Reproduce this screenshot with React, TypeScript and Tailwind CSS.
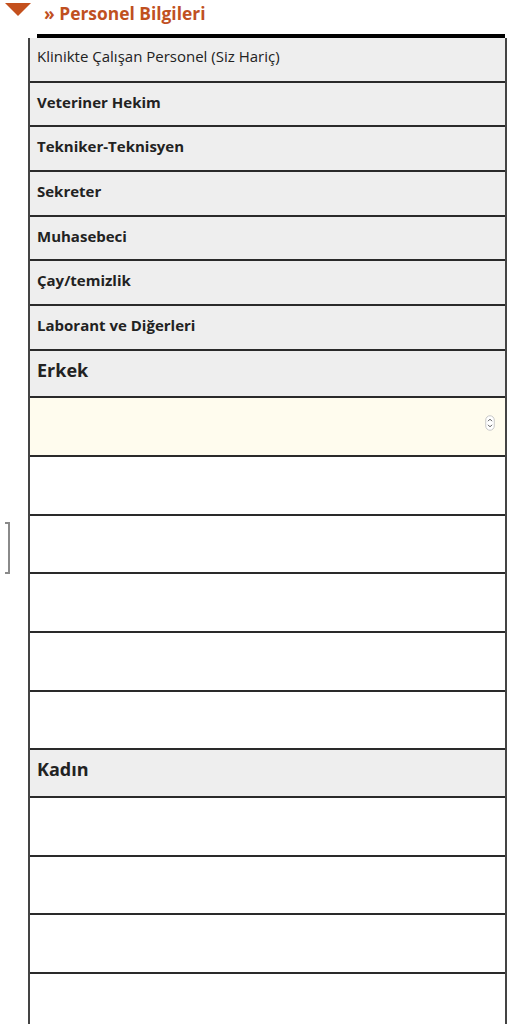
import React from "react";

const labels = [
  "Veteriner Hekim",
  "Tekniker-Teknisyen",
  "Sekreter",
  "Muhasebeci",
  "Çay/temizlik",
  "Laborant ve Diğerleri",
];

function Spinner() {
  return (
    <svg width="10" height="16" viewBox="0 0 10 16" className="absolute right-[10px] top-[17px]">
      <rect x="0.75" y="0.75" width="8.5" height="14.5" rx="4.25" fill="#fff" stroke="#c8c8c8" strokeWidth="1" />
      <path d="M3 6.2 L5 4.2 L7 6.2" fill="none" stroke="#555" strokeWidth="1" />
      <path d="M3 9.8 L5 11.8 L7 9.8" fill="none" stroke="#555" strokeWidth="1" />
    </svg>
  );
}

function InputRow({ active }: { active?: boolean }) {
  return (
    <div
      className={`relative h-[58.7px] border-b-2 border-[#2a2a2a] ${
        active ? "bg-[#fffcee]" : "bg-white"
      }`}
    >
      {active && <Spinner />}
    </div>
  );
}

function HeaderRow({ title }: { title: string }) {
  return (
    <div className="h-[47.5px] border-b-2 border-[#2a2a2a] bg-[#eeeeee] px-[7px] pt-[7px] text-[18px] font-bold leading-[24px] text-[#222]">
      {title}
    </div>
  );
}

export default function App() {
  return (
    <div
      className="relative min-h-[1024px] bg-white"
      style={{ fontFamily: '"Open Sans", "Noto Sans", sans-serif' }}
    >
      {/* heading */}
      <div className="flex h-[34px] items-start">
        <svg width="26" height="13" viewBox="0 0 26 13" className="ml-[5px] mt-[3px]">
          <polygon points="0,0 26,0 13,13" fill="#c4501d" />
        </svg>
        <div className="ml-[13px] mt-[1px] text-[17.4px] font-bold leading-[24px] text-[#c0501f]">
          » Personel Bilgileri
        </div>
      </div>

      {/* side bracket */}
      <div className="absolute left-[5px] top-[522px] h-[52px] w-[5px] border-y-2 border-r-2 border-[#8a8a8a]" />

      <div className="ml-[37px] h-[4px] w-[468px] bg-black" />

      <div className="ml-[28px] w-[479px] border-x-2 border-[#444]">
        <div className="h-[44.7px] border-b-2 border-[#2a2a2a] bg-[#eeeeee] px-[7px] pt-[7px] text-[15px] leading-[22px] text-[#222]">
          Klinikte Çalışan Personel (Siz Hariç)
        </div>
        {labels.map((l) => (
          <div
            key={l}
            className="h-[44.7px] border-b-2 border-[#2a2a2a] bg-[#eeeeee] px-[7px] pt-[8px] text-[15px] font-bold leading-[22px] text-[#222]"
          >
            {l}
          </div>
        ))}
        <HeaderRow title="Erkek" />
        <InputRow active />
        <InputRow />
        <InputRow />
        <InputRow />
        <InputRow />
        <InputRow />
        <HeaderRow title="Kadın" />
        <InputRow />
        <InputRow />
        <InputRow />
        <InputRow />
      </div>
    </div>
  );
}
